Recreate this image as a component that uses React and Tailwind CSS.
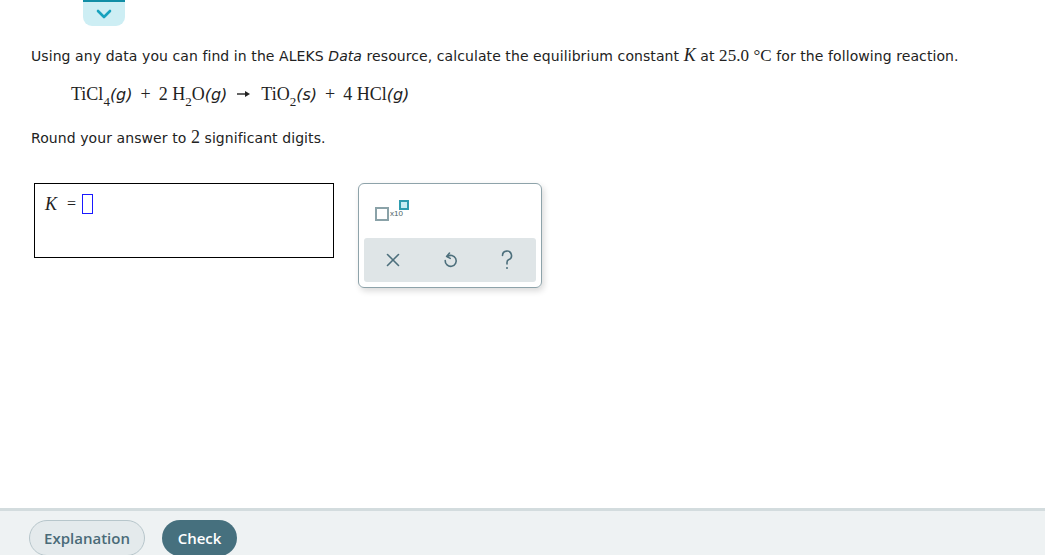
import React from "react";

const sans = { fontFamily: '"DejaVu Sans", Verdana, sans-serif' };

function Chevron() {
  return (
    <svg width="16" height="10" viewBox="0 0 16 10">
      <path d="M2 2 L8 8 L14 2" fill="none" stroke="#17a2be" strokeWidth="2.6" strokeLinecap="round" strokeLinejoin="round" />
    </svg>
  );
}

function Sub({ children }) {
  return <sub className="text-[13px] relative top-[2px] align-sub leading-none">{children}</sub>;
}

function Phase({ children }) {
  return <span className="italic text-[16px]" style={sans}>{children}</span>;
}

export default function App() {
  return (
    <div className="w-[1045px] h-[555px] flex flex-col bg-white overflow-hidden text-[#222]">
      <div className="flex-1 flex flex-col px-[31px]">
        <div className="ml-[52px] w-[42px] h-[26px] bg-[#cdeef4] rounded-b-[9px] border-t-2 border-[#118ea6] flex items-center justify-center">
          <Chevron />
        </div>

        <p className="mt-[19px] text-[14px] leading-[20px] tracking-[0.08px] text-[#222]" style={sans}>
          Using any data you can find in the ALEKS <i>Data</i> resource, calculate the equilibrium constant{" "}
          <span className="italic text-[18px]" style={{ fontFamily: '"Liberation Serif", serif' }}>K</span> at{" "}
          <span className="text-[17px]" style={{ fontFamily: '"Liberation Serif", serif' }}>25.0 °C</span> for the following reaction.
        </p>

        <div className="mt-[17px] ml-[40px] h-[22px] flex items-center text-[18px] text-[#222] whitespace-pre" style={{ fontFamily: '"Liberation Serif", serif' }}>
          <span>TiCl<Sub>4</Sub><Phase>(g)</Phase></span>
          <span className="mx-[8px]">+</span>
          <span>2 H<Sub>2</Sub>O<Phase>(g)</Phase></span>
          <span className="mx-[10px] flex items-center">
            <svg width="14" height="8" viewBox="0 0 14 8"><path d="M0 4 H9" stroke="#222" strokeWidth="1.4" /><path d="M8 1 L13 4 L8 7 Z" fill="#222" /></svg>
          </span>
          <span>TiO<Sub>2</Sub><Phase>(s)</Phase></span>
          <span className="mx-[8px]">+</span>
          <span>4 HCl<Phase>(g)</Phase></span>
        </div>

        <p className="mt-[22px] text-[14px] leading-[20px] tracking-[0.08px]" style={sans}>
          Round your answer to <span className="text-[18px]" style={{ fontFamily: '"Liberation Serif", serif' }}>2</span> significant digits.
        </p>

        <div className="mt-[35px] flex items-start">
          <div className="ml-[3px] w-[300px] h-[75px] border border-black px-[10px] pt-[10px]">
            <div className="flex items-center h-[20px]" style={{ fontFamily: '"Liberation Serif", serif' }}>
              <span className="italic text-[18px]">K</span>
              <span className="ml-[10px] text-[16px]">=</span>
              <span className="ml-[6px] w-[11px] h-[20px] border-[1.5px] border-[#1a1aff]"></span>
            </div>
          </div>

          <div className="ml-[24px] w-[184px] h-[105px] border border-[#8ea3aa] rounded-[6px] shadow-[2px_3px_6px_rgba(0,0,0,0.15)] px-[5px] pt-[16px] pb-[5px] flex flex-col">
            <div className="ml-[11px] relative h-[22px] w-[40px]">
              <div className="absolute left-0 top-[7px] w-[14px] h-[14px] border-2 border-[#8aa2a8] bg-white"></div>
              <span className="absolute left-[15px] top-[10px] text-[8px] leading-none text-[#4b5f66]" style={{ fontFamily: '"Liberation Sans", sans-serif' }}>x10</span>
              <div className="absolute left-[24px] top-0 w-[10px] h-[10px] border-2 border-[#2f9db0] bg-[#c8eef4]"></div>
            </div>
            <div className="mt-auto h-[44px] bg-[#dfe5e7] rounded-[3px] flex items-center justify-between px-[22px]">
              <svg width="14" height="14" viewBox="0 0 14 14"><path d="M1.5 1.5 L12.5 12.5 M12.5 1.5 L1.5 12.5" stroke="#4d6f7c" strokeWidth="1.6" strokeLinecap="round" /></svg>
              <svg width="16" height="18" viewBox="0 0 16 18">
                <path d="M5.2 5.6 A5.5 5.5 0 1 1 3.2 9.5" fill="none" stroke="#4d6f7c" strokeWidth="1.6" strokeLinecap="round" />
                <path d="M7.5 2 L4.6 5.4 L8.2 7.4" fill="none" stroke="#4d6f7c" strokeWidth="1.6" strokeLinecap="round" strokeLinejoin="round" />
              </svg>
              <svg width="14" height="20" viewBox="0 0 14 20">
                <path d="M2.5 5.5 A4.5 4.5 0 1 1 8.5 9.8 C7.3 10.4 7 11.2 7 12.6 V14" fill="none" stroke="#4d6f7c" strokeWidth="1.6" strokeLinecap="round" />
                <circle cx="7" cy="18" r="1" fill="#4d6f7c" />
              </svg>
            </div>
          </div>
        </div>
      </div>

      <div className="h-[47px] border-t-[3px] border-[#d3dcde] bg-[#eef2f3] flex items-start pt-[9px] pl-[29px] gap-[17px]" style={{ fontFamily: '"Open Sans", sans-serif' }}>
        <button className="w-[116px] h-[36px] rounded-full border border-[#b7c6cb] bg-[#e4eaec] text-[#4a6b78] text-[15px] font-semibold">Explanation</button>
        <button className="w-[75px] h-[36px] rounded-full bg-[#46707e] text-white text-[15px] font-semibold">Check</button>
      </div>
    </div>
  );
}
